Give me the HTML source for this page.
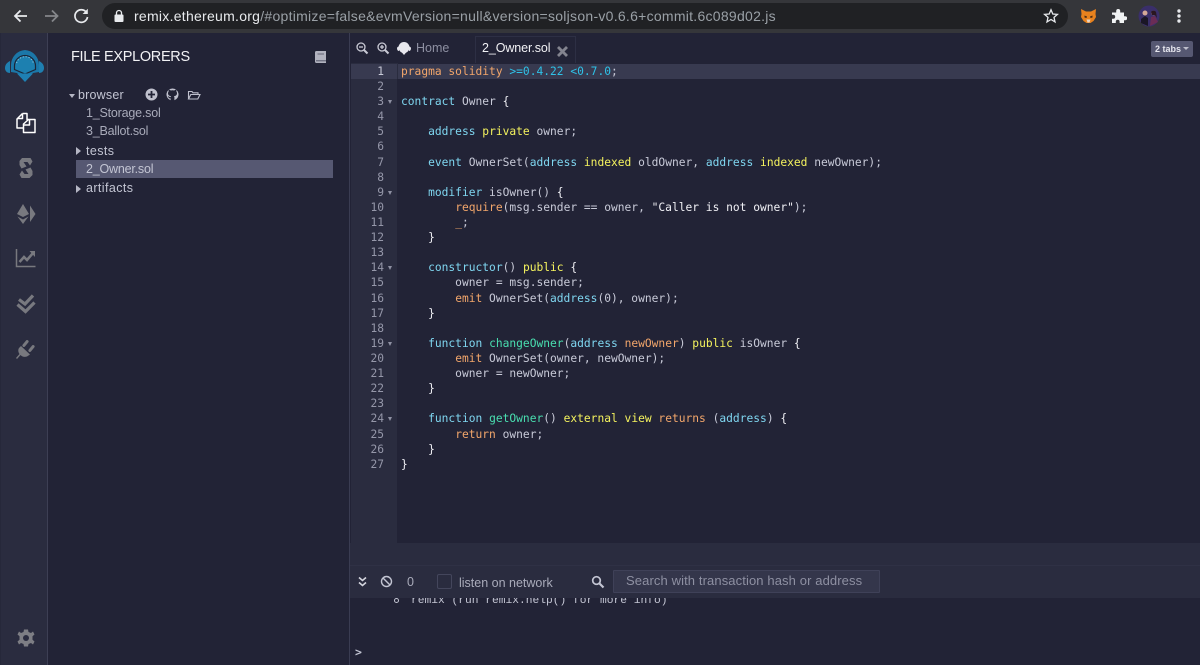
<!DOCTYPE html>
<html><head><meta charset="utf-8"><style>
html,body{margin:0;padding:0;background:#222336;width:1200px;height:665px;overflow:hidden}
body{position:relative;font-family:"Liberation Sans",sans-serif;filter:blur(.3px)}
.a{position:absolute}
.t{position:absolute;white-space:pre}
.l{position:absolute;left:401px;height:15px;line-height:15px;white-space:pre;font:11.25px/15px "DejaVu Sans Mono",monospace;color:#c8cad8}
.n{position:absolute;left:351px;width:33px;text-align:right;height:15px;font:11.25px/15px "DejaVu Sans Mono",monospace;color:#9597a9}
.f{position:absolute;left:388px;width:0;height:0;border-left:2.5px solid transparent;border-right:2.5px solid transparent;border-top:4px solid #8f91a3}
.k{color:#7fd6f0}.y{color:#f4f25e}.o{color:#f2a66b}.g{color:#49dfb0}.c{color:#2fc2e8}.w{color:#f0f0f5}
</style></head><body>
<!-- chrome bar -->
<div class="a" style="left:0;top:0;width:1200px;height:33px;background:#35363a"></div>
<div class="a" style="left:102px;top:3px;width:966px;height:26px;border-radius:13px;background:#202124"></div>
<svg class="a" style="left:0;top:0" width="110" height="33" viewBox="0 0 110 33" fill="none">
<path d="M27 16H15.500M20.500 10.500L15 16L20.500 21.500" stroke="#e8eaed" stroke-width="1.800"/>
<path d="M45 16H57M52 10.500L57.500 16L52 21.500" stroke="#85878a" stroke-width="1.800"/>
<path d="M86.500 12.500A6.300 6.300 0 1 0 87.500 17" stroke="#e8eaed" stroke-width="1.700"/>
<path d="M87.800 8.800V14H82.600Z" fill="#e8eaed"/>
</svg>
<svg class="a" style="left:113px;top:9px" width="12" height="14" viewBox="0 0 12 14"><rect x="1.500" y="5.500" width="9" height="7.500" rx="1" fill="#e8eaed"/><path d="M3.500 6V4a2.500 2.500 0 0 1 5 0v2" fill="none" stroke="#e8eaed" stroke-width="1.300"/></svg>
<div class="t" style="left:134px;top:8px;font-size:14px;line-height:17px;color:#e8eaed;letter-spacing:.27px">remix.ethereum.org<span style="color:#9aa0a6">/#optimize=false&amp;evmVersion=null&amp;version=soljson-v0.6.6+commit.6c089d02.js</span></div>
<svg class="a" style="left:1043px;top:8px" width="16" height="16" viewBox="0 0 16 16"><path d="M8 1.800L9.800 6L14.400 6.400L11 9.400L12 13.900L8 11.500L4 13.900L5 9.400L1.600 6.400L6.200 6Z" fill="none" stroke="#e8eaed" stroke-width="1.300"/></svg>
<svg class="a" style="left:1080px;top:8px" width="17" height="16" viewBox="0 0 17 16"><path d="M1 1L6 3.500H11L16 1L15.500 6L16 9L13.500 13L10.500 15H6.500L3.500 13L1 9L1.500 6Z" fill="#e8821e"/><path d="M4.500 7.500L7 8.500L6.500 10L4.500 9.500ZM12.500 7.500L10 8.500L10.500 10L12.500 9.500Z" fill="#4a2c14"/><path d="M6.500 11.500H10.500L9.500 14.500H7.500Z" fill="#e8d5c4"/></svg>
<svg class="a" style="left:1111px;top:8px" width="16" height="16" viewBox="0 0 16 16"><path d="M1 4.500H5.200V3a2 2 0 0 1 4 0V4.500H13V8.200H14.200a2 2 0 0 1 0 4H13V15H8.600V13.600a1.900 1.900 0 0 0-3.800 0V15H1V10.800H2.200a2 2 0 0 0 0-4H1Z" fill="#f1f3f4"/></svg>
<svg class="a" style="left:1138px;top:5px" width="22" height="22" viewBox="0 0 22 22"><circle cx="11" cy="11" r="10.500" fill="#3a2f6a"/><path d="M3 18V14L7 11L10 13V21Z" fill="#1a1626"/><circle cx="7" cy="8" r="2.500" fill="#d4a898"/><path d="M12 21L13 12L17 11L20 17Z" fill="#6a2c55"/><circle cx="15.500" cy="8" r="2.300" fill="#c99580"/><path d="M13 7a3 3 0 0 1 5 0L19 13L17 10H14Z" fill="#2a1620"/></svg>
<svg class="a" style="left:1176px;top:8px" width="6" height="16" viewBox="0 0 6 16"><circle cx="3" cy="3" r="1.700" fill="#e8eaed"/><circle cx="3" cy="8" r="1.700" fill="#e8eaed"/><circle cx="3" cy="13" r="1.700" fill="#e8eaed"/></svg>

<!-- icon panel -->
<div class="a" style="left:0;top:33px;width:48px;height:632px;background:#2a2c3f"></div>
<div class="a" style="left:47px;top:33px;width:1px;height:632px;background:#3d3f54"></div>
<div class="a" style="left:0;top:33px;width:1px;height:632px;background:#26283a"></div>
<svg class="a" style="left:4px;top:48px" width="42" height="36" viewBox="0 0 42 36">
<path d="M1 20C1 16 4 14 6 13V25C3 25 1 23 1 20ZM40 20C40 16 37 14 35 13V25C38 25 40 23 40 20Z" fill="#1f7fb0"/>
<path d="M21 2A15 15 0 0 1 35 17V24L29 25L21 28L13 25L7 24V17A15 15 0 0 1 21 2Z" fill="#1b77a8"/>
<path d="M10.500 18A10.500 10.500 0 0 1 31.500 18V21.500L21 26L10.500 21.500Z" fill="#1d80b0" stroke="#1b2638" stroke-width="1.200"/>
<path d="M12.500 15L14 12L17 9.500L21 8.500L25 9.500L28 12L29.500 15" fill="none" stroke="#8cc6e0" stroke-width="1" stroke-dasharray="1.200 1.800"/>
<path d="M13 25.500H29L21 34Z" fill="#1e80b3"/>
</svg>
<svg class="a" style="left:14px;top:111px" width="24" height="24" viewBox="0 0 24 24" fill="none" stroke="#fff" stroke-width="1.500" stroke-linejoin="round">
<path d="M8.500 2.500H13V8.500H14.500M8.500 2.500L3 8V17H9"/>
<path d="M8.500 2.500V7.500H3.500"/>
<path d="M16 8.500H21V21.500H9.500V13L14.500 8.500Z" fill="#2a2c3f"/>
<path d="M15.500 8.500V14H9.500"/>
</svg>
<svg class="a" style="left:19px;top:158px" width="14" height="20" viewBox="0 0 14 20" fill="#78797f">
<path d="M3 0H11.500L13.500 3.500L11 7.500L8.500 4H4.500L7.500 8.500L2.500 10.500L.5 7V3Z"/>
<path d="M10.500 20H2.500L.5 16.500L3 12.500L5.500 16H9.500L6.500 11.500L11.500 9.500L13.500 13V17Z"/>
</svg>
<svg class="a" style="left:16px;top:204px" width="20" height="20" viewBox="0 0 20 20" fill="#78797f">
<path d="M7 0L1 10L7 13L13 10ZM14 1.500L19.500 10L14 18ZM1.500 12.500L7 20L12.500 12.500L7 15.500Z"/>
</svg>
<svg class="a" style="left:15px;top:249px" width="22" height="19" viewBox="0 0 22 19" fill="none">
<path d="M1.500 0V17.500H20.500" stroke="#78797f" stroke-width="1.500"/>
<path d="M4.500 13L9 8L12 11L18 4" stroke="#78797f" stroke-width="2.500"/>
<path d="M14.500 2H20V8Z" fill="#78797f"/>
</svg>
<svg class="a" style="left:15px;top:293px" width="22" height="22" viewBox="0 0 22 22" fill="none" stroke="#78797f" stroke-width="3.200">
<path d="M4 6.500L10 11L18 2.500"/><path d="M2.500 11.500L10.500 18.500L19.500 9.500"/>
</svg>
<svg class="a" style="left:15px;top:338px" width="22" height="22" viewBox="0 0 22 22" fill="#78797f">
<path d="M6 8L15 16.500L12 18.500C9 19.500 7 18.500 5.500 17L2 21L1 20L4.500 16C3 14 3 11.500 4 10Z"/>
<rect x="9" y="1.500" width="3" height="8" rx="1.500" transform="rotate(40 10.500 5.500)"/>
<rect x="15" y="6.500" width="3" height="8" rx="1.500" transform="rotate(40 16.500 10.500)"/>
</svg>
<svg class="a" style="left:16px;top:628px" width="20" height="20" viewBox="0 0 20 20">
<path d="M8 1.500H12L12.500 4L15 5L17 3.500L18.500 6.500L16.500 8.300V11.700L18.500 13.500L17 16.500L15 15L12.500 16L12 18.500H8L7.500 16L5 15L3 16.500L1.500 13.500L3.500 11.700V8.300L1.500 6.500L3 3.500L5 5L7.500 4Z" fill="#7d7e84"/>
<circle cx="10" cy="10" r="3" fill="#2a2c3f"/>
</svg>

<!-- file explorer -->
<div class="a" style="left:48px;top:33px;width:301px;height:632px;background:#222336"></div>
<div class="a" style="left:349px;top:33px;width:1px;height:632px;background:#3a3c52"></div>
<div class="t" style="left:71px;top:48px;font-size:14.500px;letter-spacing:-.32px;line-height:18px;color:#f2f2f5">FILE EXPLORERS</div>
<svg class="a" style="left:314px;top:50px" width="13" height="14" viewBox="0 0 13 14"><path d="M2.500 1H12V13H2.500A1.500 1.500 0 0 1 1 11.500V2.500A1.500 1.500 0 0 1 2.500 1Z" fill="#b1b2bf"/><path d="M3.500 4H10M2 10.800H12" stroke="#4a4b5f" stroke-width=".8"/></svg>
<div class="a" style="left:69px;top:94px;width:0;height:0;border-left:3.500px solid transparent;border-right:3.500px solid transparent;border-top:4px solid #b5b6c4"></div>
<div class="t" style="left:78px;top:88px;font-size:12.500px;letter-spacing:.2px;line-height:15px;color:#c3c5d3">browser</div>
<svg class="a" style="left:145px;top:88px" width="13" height="13" viewBox="0 0 13 13"><circle cx="6.500" cy="6.500" r="6" fill="#bfc0cd"/><path d="M6.500 3V10M3 6.500H10" stroke="#222336" stroke-width="1.800"/></svg>
<svg class="a" style="left:166px;top:88px" width="13" height="13" viewBox="0 0 13 13"><path d="M6.500.500A6 6 0 0 0 4.600 12.200V10.300C3 10.700 2.600 9.600 2.300 9C2 8.500 1.500 8.300 2 8.200C3 8.200 3.400 9.200 4.600 9.100C4.700 8.700 4.900 8.400 5.100 8.200C3 8 2 6.900 2 5.300C2 4.500 2.300 3.900 2.700 3.400C2.500 2.900 2.500 2.200 2.800 1.800C3.600 1.800 4.200 2.100 4.700 2.500A6 6 0 0 1 8.300 2.500C8.800 2.100 9.400 1.800 10.200 1.800C10.500 2.200 10.500 2.900 10.300 3.400C10.700 3.900 11 4.500 11 5.300C11 6.900 10 8 7.900 8.200C8.200 8.500 8.400 8.900 8.400 9.500V12.200A6 6 0 0 0 6.500.500Z" fill="#bfc0cd"/></svg>
<svg class="a" style="left:187px;top:89px" width="14" height="12" viewBox="0 0 14 12" fill="none" stroke="#bfc0cd" stroke-width="1.100"><path d="M1.500 10V2.500H5L6 3.800H11V5.500M1.500 10H10.800L13 5.500H3.800Z"/></svg>
<div class="t" style="left:86px;top:106px;font-size:12.500px;letter-spacing:-.2px;line-height:15px;color:#a9abba">1_Storage.sol</div>
<div class="t" style="left:86px;top:124px;font-size:12.500px;letter-spacing:-.2px;line-height:15px;color:#a9abba">3_Ballot.sol</div>
<div class="a" style="left:76px;top:147px;width:0;height:0;border-top:4px solid transparent;border-bottom:4px solid transparent;border-left:5px solid #b5b6c4"></div>
<div class="t" style="left:86px;top:144px;font-size:12.500px;letter-spacing:.4px;line-height:15px;color:#c3c5d3">tests</div>
<div class="a" style="left:76px;top:160px;width:257px;height:18px;background:#565872"></div>
<div class="t" style="left:86px;top:162px;font-size:12.500px;letter-spacing:-.2px;line-height:15px;color:#c3c5d3">2_Owner.sol</div>
<div class="a" style="left:76px;top:185px;width:0;height:0;border-top:4px solid transparent;border-bottom:4px solid transparent;border-left:5px solid #b5b6c4"></div>
<div class="t" style="left:86px;top:181px;font-size:12.500px;letter-spacing:.4px;line-height:15px;color:#c3c5d3">artifacts</div>

<!-- tabs -->
<svg class="a" style="left:355px;top:41px" width="36" height="14" viewBox="0 0 36 14" fill="none" stroke="#c8c9d4" stroke-width="1.300"><circle cx="6" cy="6" r="4"/><path d="M9 9L12.500 12.500" stroke-width="2"/><path d="M4 6H8"/><circle cx="27" cy="6" r="4"/><path d="M30 9L33.500 12.500" stroke-width="2"/><path d="M25 6H29M27 4V8"/></svg>
<svg class="a" style="left:396px;top:41px" width="16" height="15" viewBox="0 0 16 15"><circle cx="8" cy="6.500" r="5.500" fill="#e8e8ee"/><path d="M1 7.500C1 6 2 5.500 3 5.500V10C2 10 1 9 1 7.500ZM15 7.500C15 6 14 5.500 13 5.500V10C14 10 15 9 15 7.500ZM5.500 11H10.500L8 14Z" fill="#e8e8ee"/></svg>
<div class="t" style="left:416px;top:41px;font-size:12.500px;line-height:15px;color:#8e90a2">Home</div>
<div class="a" style="left:475px;top:36px;width:101px;height:27px;background:#222336;border:1px solid #2d2f44;border-bottom:0;box-sizing:border-box"></div>
<div class="t" style="left:482px;top:41px;font-size:12.500px;letter-spacing:-.1px;line-height:15px;color:#f2f2f5">2_Owner.sol</div>
<svg class="a" style="left:556px;top:45px" width="13" height="13" viewBox="0 0 13 13"><path d="M2 2L11 11M11 2L2 11" stroke="#83848f" stroke-width="2.800"/></svg>
<div class="a" style="left:1151px;top:41px;width:42px;height:16px;border-radius:2px;background:#565872"></div>
<div class="t" style="left:1155px;top:42px;font-size:9px;font-weight:bold;line-height:14px;color:#e6e6ee">2 tabs</div>
<div class="a" style="left:1183px;top:47px;width:0;height:0;border-left:3px solid transparent;border-right:3px solid transparent;border-top:3px solid #bdbecb"></div>

<!-- editor -->
<div class="a" style="left:351px;top:63px;width:46px;height:480px;background:#2a2c3f"></div>
<div class="a" style="left:397px;top:63px;width:803px;height:480px;background:#222336"></div>
<div class="a" style="left:351px;top:64px;width:849px;height:15px;background:#383a50"></div>
<div class="a" style="left:397px;top:63px;width:1px;height:16px;background:#2a2c3f"></div>
<div class="n" style="top:64px;color:#c8cad8">1</div>
<div class="n" style="top:79px">2</div>
<div class="n" style="top:94px">3</div><div class="f" style="top:100px"></div>
<div class="n" style="top:109px">4</div>
<div class="n" style="top:124px">5</div>
<div class="n" style="top:139px">6</div>
<div class="n" style="top:155px">7</div>
<div class="n" style="top:170px">8</div>
<div class="n" style="top:185px">9</div><div class="f" style="top:191px"></div>
<div class="n" style="top:200px">10</div>
<div class="n" style="top:215px">11</div>
<div class="n" style="top:230px">12</div>
<div class="n" style="top:245px">13</div>
<div class="n" style="top:260px">14</div><div class="f" style="top:266px"></div>
<div class="n" style="top:275px">15</div>
<div class="n" style="top:291px">16</div>
<div class="n" style="top:306px">17</div>
<div class="n" style="top:321px">18</div>
<div class="n" style="top:336px">19</div><div class="f" style="top:342px"></div>
<div class="n" style="top:351px">20</div>
<div class="n" style="top:366px">21</div>
<div class="n" style="top:381px">22</div>
<div class="n" style="top:396px">23</div>
<div class="n" style="top:411px">24</div><div class="f" style="top:417px"></div>
<div class="n" style="top:427px">25</div>
<div class="n" style="top:442px">26</div>
<div class="n" style="top:457px">27</div>

<div class="l" style="top:64px"><span class="o">pragma solidity</span> <span class="c">&gt;=0.4.22 &lt;0.7.0</span>;</div>
<div class="l" style="top:94px"><span class="k">contract</span> Owner <span class="w">{</span></div>
<div class="l" style="top:124px">    <span class="k">address</span> <span class="y">private</span> owner;</div>
<div class="l" style="top:155px">    <span class="k">event</span> OwnerSet(<span class="k">address</span> <span class="y">indexed</span> oldOwner, <span class="k">address</span> <span class="y">indexed</span> newOwner);</div>
<div class="l" style="top:185px">    <span class="k">modifier</span> isOwner() <span class="w">{</span></div>
<div class="l" style="top:200px">        <span class="o">require</span>(msg.sender == owner, <span class="w">"Caller is not owner"</span>);</div>
<div class="l" style="top:215px">        <span class="o">_</span>;</div>
<div class="l" style="top:230px">    <span class="w">}</span></div>
<div class="l" style="top:260px">    <span class="k">constructor</span>() <span class="y">public</span> <span class="w">{</span></div>
<div class="l" style="top:275px">        owner = msg.sender;</div>
<div class="l" style="top:291px">        <span class="o">emit</span> OwnerSet(<span class="k">address</span>(0), owner);</div>
<div class="l" style="top:306px">    <span class="w">}</span></div>
<div class="l" style="top:336px">    <span class="k">function</span> <span class="g">changeOwner</span>(<span class="k">address</span> <span class="o">newOwner</span>) <span class="y">public</span> isOwner <span class="w">{</span></div>
<div class="l" style="top:351px">        <span class="o">emit</span> OwnerSet(owner, newOwner);</div>
<div class="l" style="top:366px">        owner = newOwner;</div>
<div class="l" style="top:381px">    <span class="w">}</span></div>
<div class="l" style="top:411px">    <span class="k">function</span> <span class="g">getOwner</span>() <span class="y">external</span> <span class="y">view</span> <span class="o">returns</span> (<span class="k">address</span>) <span class="w">{</span></div>
<div class="l" style="top:427px">        <span class="o">return</span> owner;</div>
<div class="l" style="top:442px">    <span class="w">}</span></div>
<div class="l" style="top:457px"><span class="w">}</span></div>

<!-- terminal -->
<div class="a" style="left:394px;top:598px;width:5px;height:5px;box-sizing:border-box;border:1px solid #c3c5d3;border-radius:50%"></div>
<div class="t" style="left:411px;top:595px;font:11.250px/13px 'Liberation Mono',monospace;color:#c3c5d3">remix (run remix.help() for more info)</div>
<div class="a" style="left:350px;top:543px;width:850px;height:55px;background:#2a2c3f"></div>
<div class="a" style="left:350px;top:565px;width:850px;height:1px;background:#2f3145"></div>
<svg class="a" style="left:358px;top:576px" width="9" height="12" viewBox="0 0 9 12" fill="none" stroke="#d5d6df" stroke-width="1.600"><path d="M1 1.500L4.500 4.500L8 1.500M1 6.500L4.500 9.500L8 6.500"/></svg>
<svg class="a" style="left:380px;top:575px" width="13" height="13" viewBox="0 0 13 13" fill="none" stroke="#c3c5d3" stroke-width="1.400"><circle cx="6.500" cy="6.500" r="5"/><path d="M3 3L10 10"/></svg>
<div class="t" style="left:407px;top:575px;font-size:12.500px;line-height:15px;color:#a9abba">0</div>
<div class="a" style="left:437px;top:574px;width:15px;height:15px;box-sizing:border-box;border:1px solid #44465c;border-radius:2px;background:#2a2c3f"></div>
<div class="t" style="left:459px;top:576px;font-size:12.500px;line-height:15px;color:#a9abba">listen on network</div>
<svg class="a" style="left:591px;top:575px" width="14" height="14" viewBox="0 0 14 14" fill="none" stroke="#c3c5d3"><circle cx="5.500" cy="5.500" r="3.800" stroke-width="1.700"/><path d="M8.500 8.500L12.500 12.500" stroke-width="2.200"/></svg>
<div class="a" style="left:613px;top:570px;width:267px;height:23px;box-sizing:border-box;background:#34364b;border:1px solid #3f4158;border-radius:1px"></div>
<div class="t" style="left:626px;top:573px;font-size:13px;letter-spacing:.11px;line-height:16px;color:#8e90a2">Search with transaction hash or address</div>
<div class="t" style="left:355px;top:645px;font:bold 11.500px/15px 'DejaVu Sans Mono',monospace;color:#c3c5d3">&gt;</div>
</body></html>
